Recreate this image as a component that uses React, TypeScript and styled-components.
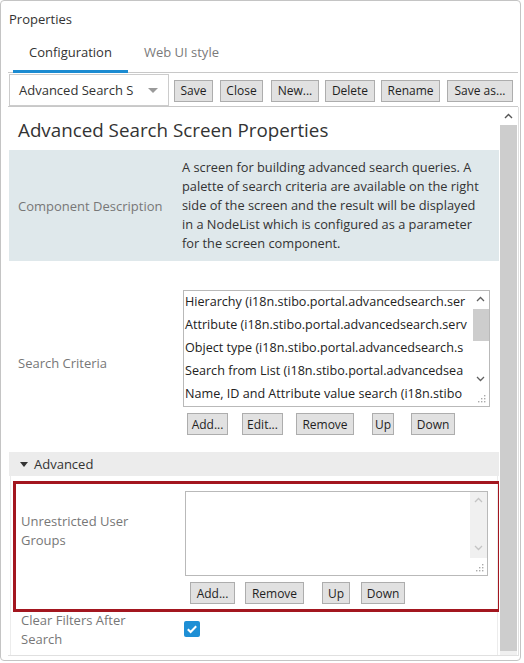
import React from 'react'
import styled, { createGlobalStyle } from 'styled-components'

const GlobalStyle = createGlobalStyle`
  html, body {
    margin: 0;
    padding: 0;
    background: #ffffff;
  }
  body {
    font-family: "Open Sans", "Noto Sans", sans-serif;
    color: #333333;
  }
  * {
    box-sizing: border-box;
  }
`

const criteria = [
  'Hierarchy (i18n.stibo.portal.advancedsearch.ser',
  'Attribute (i18n.stibo.portal.advancedsearch.serv',
  'Object type (i18n.stibo.portal.advancedsearch.s',
  'Search from List (i18n.stibo.portal.advancedsea',
  'Name, ID and Attribute value search (i18n.stibo',
]

const toolbarButtons = [
  { label: 'Save', w: 39, gap: 0 },
  { label: 'Close', w: 43, gap: 7 },
  { label: 'New...', w: 48, gap: 8 },
  { label: 'Delete', w: 50, gap: 6 },
  { label: 'Rename', w: 59, gap: 6 },
  { label: 'Save as...', w: 66, gap: 7 },
]

export default function App() {
  return (
    <>
      <GlobalStyle />
      <Window>
        <Title>Properties</Title>
        <Tabs>
          <Tab $active>Configuration</Tab>
          <Tab>Web UI style</Tab>
        </Tabs>
        <Toolbar>
          <Select>
            <span>Advanced Search S</span>
            <Caret />
          </Select>
          {toolbarButtons.map((b) => (
            <Button key={b.label} $w={b.w} $gap={b.gap}>
              {b.label}
            </Button>
          ))}
        </Toolbar>

        <Body>
          <Content>
            <Heading>Advanced Search Screen Properties</Heading>

            <DescRow>
              <Label>Component Description</Label>
              <DescText>
                A screen for building advanced search queries. A<br />
                palette of search criteria are available on the right<br />
                side of the screen and the result will be displayed<br />
                in a NodeList which is configured as a parameter<br />
                for the screen component.
              </DescText>
            </DescRow>

            <CriteriaRow>
              <Label>Search Criteria</Label>
              <div>
                <ListBox>
                  <ListItems>
                    {criteria.map((c) => (
                      <ListItem key={c}>{c}</ListItem>
                    ))}
                  </ListItems>
                  <MiniScroll>
                    <Chevron dir="up" />
                    <MiniThumb $top={18} $height={32} />
                    <Chevron dir="down" $top={82} />
                  </MiniScroll>
                  <Grip />
                </ListBox>
                <ButtonRow $indent={4}>
                  <Button $w={41}>Add...</Button>
                  <Button $w={41} $gap={14}>Edit...</Button>
                  <Button $w={58} $gap={13}>Remove</Button>
                  <Button $w={22} $gap={18}>Up</Button>
                  <Button $w={44} $gap={17}>Down</Button>
                </ButtonRow>
              </div>
            </CriteriaRow>

            <SectionHeader>
              <Triangle />
              Advanced
            </SectionHeader>

            <SectionPanel>
              <Highlight>
                <FieldGrid>
                  <WrapLabel>Unrestricted User Groups</WrapLabel>
                  <TextArea>
                    <MiniScroll $light>
                      <Chevron dir="up" $light />
                      <Chevron dir="down" $light $top={50} />
                    </MiniScroll>
                    <Grip />
                  </TextArea>
                  <span />
                  <ButtonRow $indent={5}>
                    <Button $w={45}>Add...</Button>
                    <Button $w={59} $gap={10}>Remove</Button>
                    <Button $w={28} $gap={18}>Up</Button>
                    <Button $w={44} $gap={11}>Down</Button>
                  </ButtonRow>
                </FieldGrid>
              </Highlight>

              <CheckRow>
                <WrapLabel>Clear Filters After Search</WrapLabel>
                <Checkbox>
                  <svg width="16" height="16" viewBox="0 0 16 16">
                    <path d="M3.8 8.2 L6.6 11 L12.2 5.2" fill="none" stroke="#ffffff" strokeWidth="2" />
                  </svg>
                </Checkbox>
              </CheckRow>
            </SectionPanel>
          </Content>

          <ScrollBar>
            <ScrollArrow>
              <svg width="9" height="6" viewBox="0 0 9 6">
                <path d="M1 5 L4.5 1.5 L8 5" fill="none" stroke="#555" strokeWidth="1.4" />
              </svg>
            </ScrollArrow>
            <ScrollThumb />
          </ScrollBar>
        </Body>
      </Window>
    </>
  )
}

/* small drawn parts */

const Chevron = (props: { dir: 'up' | 'down'; $top?: number; $light?: boolean }) => (
  <ChevronBox style={{ top: props.$top ?? 2 }}>
    <svg width="9" height="6" viewBox="0 0 9 6">
      <path
        d={props.dir === 'up' ? 'M1 5 L4.5 1.5 L8 5' : 'M1 1 L4.5 4.5 L8 1'}
        fill="none"
        stroke={props.$light ? '#c4c4c4' : '#606060'}
        strokeWidth="1.3"
      />
    </svg>
  </ChevronBox>
)

const Grip = () => (
  <GripBox>
    <svg width="8" height="8" viewBox="0 0 8 8">
      <rect x="6" y="0" width="1.4" height="1.4" fill="#aaa" />
      <rect x="3" y="3" width="1.4" height="1.4" fill="#aaa" />
      <rect x="6" y="3" width="1.4" height="1.4" fill="#aaa" />
      <rect x="0" y="6" width="1.4" height="1.4" fill="#aaa" />
      <rect x="3" y="6" width="1.4" height="1.4" fill="#aaa" />
      <rect x="6" y="6" width="1.4" height="1.4" fill="#aaa" />
    </svg>
  </GripBox>
)

/* ================= STYLES ================= */

const Window = styled.div`
  width: 521px;
  height: 661px;
  border: 1px solid #c4c4c4;
  border-radius: 4px;
  padding: 0 1px 4px 7px;
  display: flex;
  flex-direction: column;
`

const Title = styled.div`
  height: 31px;
  padding: 10px 0 0 1px;
  font-size: 13px;
  line-height: 17px;
  color: #333;
`

const Tabs = styled.div`
  display: flex;
  height: 41px;
  border-bottom: 1px solid #c8c8c8;
  padding-left: 5px;
  margin-right: 1px;
`

const Tab = styled.div<{ $active?: boolean }>`
  display: flex;
  align-items: center;
  padding: 2px 16px 0;
  font-size: 13px;
  color: ${(p) => (p.$active ? '#333' : '#7a7a7a')};
  border-bottom: 3px solid ${(p) => (p.$active ? '#1b8bd1' : 'transparent')};
  margin-bottom: -1px;
`

const Toolbar = styled.div`
  display: flex;
  align-items: center;
  height: 34px;
  padding-top: 1px;
  border-bottom: 1px solid #c8c8c8;
  margin-right: 1px;
`

const Select = styled.div`
  flex-shrink: 0;
  width: 160px;
  height: 32px;
  margin: 0 5px 0 1px;
  border: 1px solid #cccccc;
  display: flex;
  align-items: center;
  justify-content: space-between;
  padding: 0 10px 0 9px;
  font-size: 13px;
  color: #333;
  white-space: nowrap;
  overflow: hidden;
`

const Caret = styled.span`
  flex-shrink: 0;
  width: 0;
  height: 0;
  border-left: 5px solid transparent;
  border-right: 5px solid transparent;
  border-top: 5px solid #9a9a9a;
`

const Button = styled.button<{ $w: number; $gap?: number }>`
  flex-shrink: 0;
  height: 22px;
  width: ${(p) => p.$w}px;
  margin-left: ${(p) => p.$gap ?? 0}px;
  padding: 0;
  text-align: center;
  background: #e1e1e1;
  border: 1px solid #adadad;
  border-radius: 0;
  font-family: inherit;
  font-size: 12px;
  color: #1f1f1f;
  white-space: nowrap;
  ${Toolbar} & {
    margin-top: 1px;
  }
`

const Body = styled.div`
  flex: 1;
  display: flex;
  min-height: 0;
  border-right: 1px solid #e0e0e0;
  border-bottom: 1px solid #e0e0e0;
`

const Content = styled.div`
  flex: 1;
  min-width: 0;
  overflow: hidden;
  padding-left: 1px;
  display: flex;
  flex-direction: column;
`

const Heading = styled.div`
  height: 43px;
  flex-shrink: 0;
  padding: 2px 0 0 9px;
  display: flex;
  align-items: center;
  font-size: 18.8px;
  color: #333;
`

const Label = styled.div`
  padding-left: 9px;
  font-size: 13px;
  color: #777777;
`

const WrapLabel = styled(Label)`
  max-width: 140px;
  line-height: 19px;
`

const DescRow = styled.div`
  flex-shrink: 0;
  height: 111px;
  background: #dfe8eb;
  display: grid;
  grid-template-columns: 173px 1fr;
  align-items: center;
`

const DescText = styled.div`
  font-size: 12.8px;
  line-height: 19px;
  color: #333;
  white-space: nowrap;
`

const CriteriaRow = styled.div`
  flex-shrink: 0;
  display: grid;
  grid-template-columns: 174px 1fr;
  align-items: center;
  padding: 29px 0 17px;
`

const ListBox = styled.div`
  position: relative;
  width: 307px;
  height: 117px;
  border: 1px solid #b9b9b9;
  overflow: hidden;
`

const ListItems = styled.div`
  width: 288px;
  padding: 0 0 0 1px;
`

const ListItem = styled.div`
  height: 23px;
  line-height: 21px;
  font-size: 12.6px;
  color: #222;
  white-space: nowrap;
`

const MiniScroll = styled.div<{ $light?: boolean }>`
  position: absolute;
  top: 0;
  right: 0;
  width: 17px;
  height: ${(p) => (p.$light ? '66px' : '100px')};
  background: ${(p) => (p.$light ? '#f0f0f0' : '#ffffff')};
`

const ChevronBox = styled.div`
  position: absolute;
  left: 4px;
  width: 9px;
  height: 12px;
  display: flex;
  align-items: center;
`

const MiniThumb = styled.div<{ $top: number; $height: number }>`
  position: absolute;
  left: 1px;
  width: 16px;
  top: ${(p) => p.$top}px;
  height: ${(p) => p.$height}px;
  background: #cdcdcd;
`

const GripBox = styled.div`
  position: absolute;
  right: 3px;
  bottom: 3px;
  width: 8px;
  height: 8px;
  display: flex;
`

const ButtonRow = styled.div<{ $indent: number }>`
  display: flex;
  margin-top: 6px;
  padding-left: ${(p) => p.$indent}px;
`

const SectionHeader = styled.div`
  flex-shrink: 0;
  height: 24px;
  background: #ececec;
  display: flex;
  align-items: center;
  padding-left: 11px;
  font-size: 13px;
  color: #333;
`

const Triangle = styled.span`
  width: 0;
  height: 0;
  margin-right: 6px;
  border-left: 4px solid transparent;
  border-right: 4px solid transparent;
  border-top: 5px solid #333;
`

const SectionPanel = styled.div`
  flex: 1;
  margin: 0 1px 0 1px;
  border-left: 1px solid #ececec;
  border-right: 1px solid #ececec;
  padding-top: 5px;
`

const Highlight = styled.div`
  margin: 0 -4px 0 2px;
  border: 3px solid #a3161f;
  padding: 7px 0 5px;
`

const FieldGrid = styled.div`
  display: grid;
  grid-template-columns: 164px 1fr;
  align-items: center;
  padding-left: 5px;
  & ${WrapLabel} {
    padding-left: 0;
    margin-top: -5px;
  }
`

const TextArea = styled.div`
  position: relative;
  width: 303px;
  height: 85px;
  border: 1px solid #b9b9b9;
`

const CheckRow = styled.div`
  display: grid;
  grid-template-columns: 174px 1fr;
  align-items: center;
  margin-top: -1px;
  & ${WrapLabel} {
    padding-left: 10px;
  }
`

const Checkbox = styled.div`
  width: 16px;
  height: 16px;
  border-radius: 2px;
  background: #1e8fd5;
  display: flex;
  margin-left: -1px;
  margin-top: -2px;
`

const ScrollBar = styled.div`
  width: 17px;
  margin: 0 1px 0 1px;
  display: flex;
  flex-direction: column;
  background: #f0f0f0;
`

const ScrollArrow = styled.div`
  height: 18px;
  display: flex;
  align-items: center;
  justify-content: center;
  background: #ffffff;
`

const ScrollThumb = styled.div`
  flex: 1;
  margin-bottom: 4px;
  background: #cdcdcd;
`
